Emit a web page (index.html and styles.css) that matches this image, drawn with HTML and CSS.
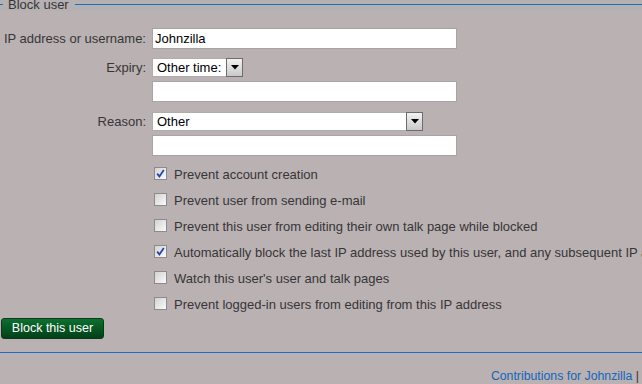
FILE: index.html
```html
<!DOCTYPE html>
<html>
<head>
<meta charset="utf-8">
<link rel="stylesheet" href="styles.css">
</head>
<body>
<fieldset class="block">
  <legend class="legend">Block user</legend>
  <div class="row r1">
    <label class="lbl">IP address or username:</label>
    <input class="text" type="text" value="Johnzilla">
  </div>
  <div class="row r2">
    <label class="lbl">Expiry:</label>
    <div class="select expiry"><span class="sel-text">Other time:</span><span class="sel-btn"><svg width="8" height="5" viewBox="0 0 8 5"><path d="M0 0H8L4 4.5Z" fill="#000"/></svg></span></div>
  </div>
  <div class="row r3">
    <span class="lbl"></span>
    <input class="text" type="text" value="">
  </div>
  <div class="row r4">
    <label class="lbl">Reason:</label>
    <div class="select reason"><span class="sel-text">Other</span><span class="sel-btn"><svg width="8" height="5" viewBox="0 0 8 5"><path d="M0 0H8L4 4.5Z" fill="#000"/></svg></span></div>
  </div>
  <div class="row r5">
    <span class="lbl"></span>
    <input class="text" type="text" value="">
  </div>
  <ul class="checks">
    <li class="check"><span class="cb"><svg width="11" height="11" viewBox="0 0 11 11"><path d="M2.2 5.6L4.4 8.4L8.8 2" fill="none" stroke="#2446a8" stroke-width="1.8"/></svg></span>Prevent account creation</li>
    <li class="check"><span class="cb"></span>Prevent user from sending e-mail</li>
    <li class="check"><span class="cb"></span>Prevent this user from editing their own talk page while blocked</li>
    <li class="check"><span class="cb"><svg width="11" height="11" viewBox="0 0 11 11"><path d="M2.2 5.6L4.4 8.4L8.8 2" fill="none" stroke="#2446a8" stroke-width="1.8"/></svg></span>Automatically block the last IP address used by this user, and any subsequent IP addresses they try to edit from</li>
    <li class="check"><span class="cb"></span>Watch this user's user and talk pages</li>
    <li class="check"><span class="cb"></span>Prevent logged-in users from editing from this IP address</li>
  </ul>
  <div class="actions"><button class="submit" type="button">Block this user</button></div>
</fieldset>
<div class="rule"></div>
<div class="links"><a class="link" href="#">Contributions for Johnzilla</a> <span class="sep">|</span></div>
</body>
</html>
```
FILE: styles.css
```css
html, body {
  margin: 0;
  padding: 0;
}
body {
  width: 642px;
  height: 384px;
  overflow: hidden;
  background: linear-gradient(to bottom, #b5b0b2 0, #b5b0b2 11px, #bab1b3 11px, #bab1b3 100%);
  font-family: "Liberation Sans", Arial, sans-serif;
  font-size: 13px;
  color: #363636;
  white-space: nowrap;
}
.block {
  margin: 0;
  padding: 0;
  border: 0;
  border-top: 1px solid #1870c4;
  min-width: 0;
}
.legend {
  margin-left: 3px;
  padding: 0 6px 0 5px;
  line-height: 9px;
  font-size: 13px;
  color: #363636;
}
.row {
  display: flex;
  align-items: center;
}
.r1 { margin-top: 19px; }
.r2 { margin-top: 9px; }
.r3 { margin-top: 4px; }
.r4 { margin-top: 10px; }
.r5 { margin-top: 4px; }
.lbl {
  width: 146px;
  margin-right: 6px;
  text-align: right;
  flex: none;
}
.text {
  box-sizing: border-box;
  width: 305px;
  height: 21px;
  margin: 0;
  padding: 0 2px;
  border: 1px solid #a8a4a5;
  background: #fff;
  font-family: "Liberation Sans", Arial, sans-serif;
  font-size: 13px;
  color: #000;
  outline: none;
}
.select {
  box-sizing: border-box;
  height: 19px;
  display: flex;
  background: #fff;
  border: 1px solid #b0acad;
  border-right: 0;
}
.expiry { width: 91px; }
.reason { width: 271px; }
.sel-text {
  flex: 1;
  padding-left: 4px;
  line-height: 17px;
  color: #000;
}
.sel-btn {
  box-sizing: border-box;
  width: 17px;
  height: 19px;
  margin-top: -1px;
  border: 1px solid #6d6b6c;
  background: linear-gradient(to bottom, #f2f2f2, #c9c9c9);
  display: flex;
  align-items: center;
  justify-content: center;
}
.checks {
  list-style: none;
  margin: 5px 0 0;
  padding: 0 0 0 154px;
}
.check {
  height: 26px;
  display: flex;
  align-items: center;
}
.cb {
  box-sizing: border-box;
  width: 13px;
  height: 13px;
  margin-right: 7px;
  margin-top: -1px;
  border: 1px solid #8d8a8b;
  background: linear-gradient(135deg, #d3d1d2, #fbfbfb);
  display: flex;
  align-items: center;
  justify-content: center;
  flex: none;
}
.actions {
  margin-top: 1px;
  padding-left: 1px;
}
.submit {
  box-sizing: border-box;
  width: 103px;
  height: 21px;
  margin: 0;
  padding: 0 0 1px;
  border: 1px solid #0b3a1a;
  border-radius: 3px;
  background: linear-gradient(to bottom, #0d7030 0, #075a24 45%, #03401a 100%);
  color: #fff;
  font-family: "Liberation Sans", Arial, sans-serif;
  font-size: 12.5px;
  text-align: center;
}
.rule {
  margin-top: 13px;
  border-top: 1px solid #1870c4;
}
.links {
  margin-top: 16px;
  text-align: right;
  padding-right: 3px;
  line-height: 15px;
  font-size: 12.3px;
}
.link {
  color: #1166bb;
  text-decoration: none;
}
.sep {
  color: #363636;
}
```
